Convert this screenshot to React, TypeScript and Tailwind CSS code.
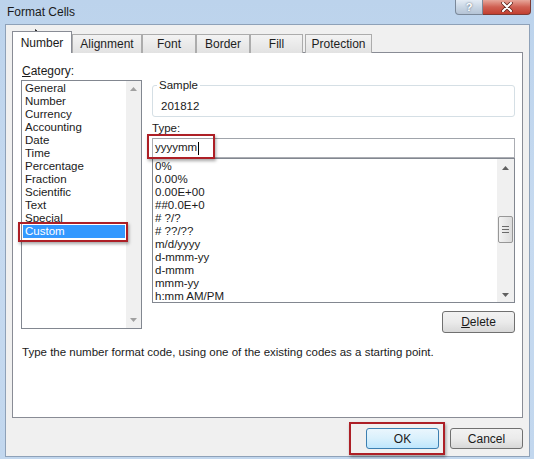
import React from 'react';

const categories = [
  'General',
  'Number',
  'Currency',
  'Accounting',
  'Date',
  'Time',
  'Percentage',
  'Fraction',
  'Scientific',
  'Text',
  'Special',
  'Custom',
];

const formats = [
  '0%',
  '0.00%',
  '0.00E+00',
  '##0.0E+0',
  '# ?/?',
  '# ??/??',
  'm/d/yyyy',
  'd-mmm-yy',
  'd-mmm',
  'mmm-yy',
  'h:mm AM/PM',
];

function Arrow({ up, color = '#606060' }: { up?: boolean; color?: string }) {
  return (
    <svg width="7" height="4" viewBox="0 0 7 4">
      {up ? <path d="M0 4 L3.5 0 L7 4 Z" fill={color} /> : <path d="M0 0 L3.5 4 L7 0 Z" fill={color} />}
    </svg>
  );
}

function Tab({ label }: { label: string }) {
  return (
    <div className="flex h-[19px] items-center justify-center border border-b-0 border-[#acacac] bg-gradient-to-b from-[#f3f3f3] to-[#e2e2e2] px-[10px] text-[12px] text-[#1e1e1e]">
      {label}
    </div>
  );
}

export default function App() {
  return (
    <div className="relative h-[459px] w-[534px] overflow-hidden bg-gradient-to-b from-[#bcd3ec] via-[#c6daf0] to-[#c2d7ee] font-['Liberation_Sans',Arial,sans-serif] text-[11.5px] text-[#1a1a1a]">
      {/* title bar */}
      <div className="flex h-[24px]">
        <div className="pl-[7px] pt-[4px] text-[12px] leading-[16px] text-[#1a1a1a]">Format Cells</div>
        <div className="ml-auto mr-[3px] flex h-[15px]">
          <div className="flex w-[28px] items-center justify-center rounded-bl-[4px] border border-t-0 border-[#7a8899] bg-gradient-to-b from-[#e4ecf5] via-[#c9d6e4] to-[#b5c4d6] text-[11px] font-bold leading-none text-white [text-shadow:0_0_2px_#4a5a6c]">
            ?
          </div>
          <div className="flex w-[48px] items-center justify-center rounded-br-[4px] border border-l-0 border-t-0 border-[#7d3a33] bg-gradient-to-b from-[#e6a69b] via-[#cf5f52] to-[#c23f30]">
            <svg width="12" height="10" viewBox="0 0 12 10">
              <path d="M2 1 L10 9 M10 1 L2 9" stroke="#5a2018" strokeWidth="3.6" strokeLinecap="round" />
              <path d="M2 1 L10 9 M10 1 L2 9" stroke="#ffffff" strokeWidth="2.2" strokeLinecap="round" />
            </svg>
          </div>
        </div>
      </div>

      {/* client area */}
      <div className="ml-[5px] h-[433px] w-[525px] border border-[#8ea1b8] bg-[#f0f0f0] pl-[6px] pt-[6px]">
        {/* tabs */}
        <div className="relative z-10 -mb-px flex h-[22px] items-end">
          <div className="flex h-[22px] w-[60px] items-center justify-center border border-b-0 border-[#898c95] bg-white text-[12px]">
            Number
          </div>
          <div className="w-[70px]">
            <Tab label="Alignment" />
          </div>
          <div className="w-[54px]">
            <Tab label="Font" />
          </div>
          <div className="w-[54px]">
            <Tab label="Border" />
          </div>
          <div className="w-[53px]">
            <Tab label="Fill" />
          </div>
          <div className="ml-[2px] w-[67px]">
            <Tab label="Protection" />
          </div>
        </div>

        {/* panel */}
        <div className="h-[366px] w-[511px] border border-[#898c95] bg-white pl-[8px] pt-[11px]">
          <div className="flex">
            {/* category column */}
            <div className="w-[121px]">
              <div className="pl-[1px] text-[12px] leading-[14px]">
                <span className="underline">C</span>ategory:
              </div>
              <div className="mt-[2px] flex h-[249px] border border-[#828790]">
                <div className="flex-1 pt-[1px]">
                  {categories.map((c) =>
                    c === 'Custom' ? (
                      <div key={c} className="ml-px w-[102px] bg-[#3399ff] pl-[2px] leading-[13px] text-white">
                        {c}
                      </div>
                    ) : (
                      <div key={c} className="pl-[3px] leading-[13px]">
                        {c}
                      </div>
                    ),
                  )}
                </div>
                <div className="flex w-[15px] flex-col items-center justify-between bg-[#f0f0f0] py-[6px]">
                  <Arrow up color="#a0a0a0" />
                  <Arrow color="#a0a0a0" />
                </div>
              </div>
            </div>

            {/* type column */}
            <div className="ml-[10px] flex w-[363px] flex-col">
              <div className="relative mt-[21px] h-[32px] rounded-[3px] border border-[#d5dfe5] pl-[8px] pt-[13px] leading-[14px]">
                <span className="absolute -top-[8px] left-[4px] bg-white px-[2px] leading-[14px]">Sample</span>
                201812
              </div>
              <div className="mt-[4px] leading-[14px]">Type:</div>
              <div className="mt-[3px] flex h-[20px] items-center border border-[#abadb3] border-t-[#a0a4ab] pl-[2px]">
                yyyymm
                <span className="ml-px h-[13px] w-px bg-black" />
              </div>
              <div className="flex h-[145px] border border-[#828790]">
                <div className="flex-1 pl-[2px] pt-[1px]">
                  {formats.map((f) => (
                    <div key={f} className="leading-[13px]">
                      {f}
                    </div>
                  ))}
                </div>
                <div className="flex w-[17px] flex-col items-center bg-[#f0f0f0] pb-[5px] pt-[7px]">
                  <Arrow up />
                  <div className="mt-[46px] flex h-[27px] w-[15px] flex-col items-center justify-center gap-[2px] rounded-[2px] border border-[#979797] bg-gradient-to-r from-[#f2f2f2] to-[#dcdcdc]">
                    <span className="h-px w-[7px] bg-[#6a6a6a]" />
                    <span className="h-px w-[7px] bg-[#6a6a6a]" />
                    <span className="h-px w-[7px] bg-[#6a6a6a]" />
                  </div>
                  <div className="mt-auto">
                    <Arrow />
                  </div>
                </div>
              </div>
              <div className="mt-[8px] flex h-[22px] w-[73px] items-center justify-center self-end rounded-[3px] border border-[#707070] bg-gradient-to-b from-[#f2f2f2] via-[#ebebeb] to-[#d8d8d8] text-[12px]">
                <span className="underline">D</span>elete
              </div>
            </div>
          </div>
          <div className="mt-[12px] pl-[1px] leading-[14px]">
            Type the number format code, using one of the existing codes as a starting point.
          </div>
        </div>

        {/* buttons */}
        <div className="mt-[10px] flex w-[511px] justify-end gap-[11px] text-[12px]">
          <div className="flex h-[21px] w-[73px] items-center justify-center rounded-[3px] border border-[#3c7fb1] bg-gradient-to-b from-[#eaf6fd] via-[#d9f0fc] to-[#bee6fd]">
            OK
          </div>
          <div className="flex h-[21px] w-[73px] items-center justify-center rounded-[3px] border border-[#707070] bg-gradient-to-b from-[#f2f2f2] via-[#ebebeb] to-[#d8d8d8]">
            Cancel
          </div>
        </div>
      </div>

      {/* annotation boxes */}
      <div className="pointer-events-none absolute left-[18px] top-[222px] h-[20px] w-[110px] border-2 border-[#ad1f26] shadow-[1px_2px_3px_rgba(0,0,0,0.35)]" />
      <div className="pointer-events-none absolute left-[147px] top-[134px] h-[25px] w-[68px] border-2 border-[#ad1f26] shadow-[1px_2px_3px_rgba(0,0,0,0.35)]" />
      <div className="pointer-events-none absolute left-[349px] top-[422px] h-[33px] w-[96px] border-2 border-[#ad1f26] shadow-[1px_2px_3px_rgba(0,0,0,0.35)]" />

      {/* mouse pointer */}
      <svg className="pointer-events-none absolute left-[35px] top-[29px]" width="13" height="20" viewBox="0 0 13 20">
        <path d="M0.5 0.5 L0.5 16 L4 12.5 L6.5 18.5 L9 17.5 L6.5 11.5 L11.5 11.5 Z" fill="#ffffff" stroke="#303030" strokeWidth="1" strokeLinejoin="round" />
      </svg>
    </div>
  );
}
